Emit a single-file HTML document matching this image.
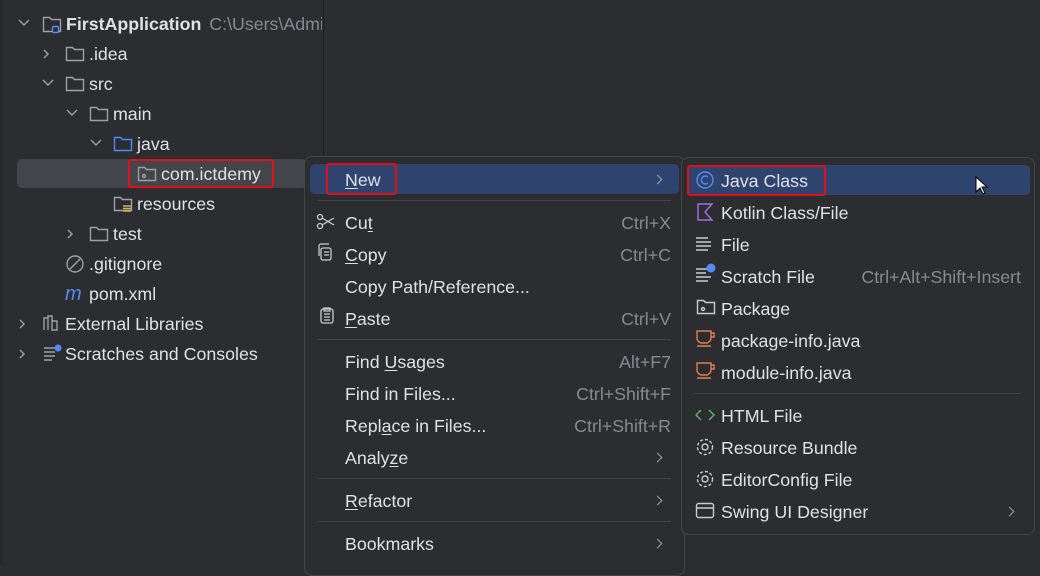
<!DOCTYPE html>
<html><head><meta charset="utf-8"><style>
*{margin:0;padding:0;box-sizing:border-box}
body{width:1040px;height:565px;background:#2b2d30;position:relative;overflow:hidden;font-family:"Liberation Sans",sans-serif;font-size:17.8px;color:#dfe1e5}
.a{position:absolute;white-space:nowrap}
.t{position:absolute;white-space:nowrap;line-height:20px}
.sc{position:absolute;white-space:nowrap;color:#868a91;line-height:20px}
.sep{position:absolute;height:1px;background:#43454a}
.arr{position:absolute;width:7px;height:7px;border-right:1.5px solid #9da0a8;border-bottom:1.5px solid #9da0a8}
.red{position:absolute;border:2px solid #e0101a;border-radius:3px}
svg{position:absolute}
u{text-decoration:underline;text-underline-offset:2px}
</style></head><body>
<div class="a" style="left:323px;top:0;width:1px;height:565px;background:#1e1f22"></div>
<div class="a" style="left:0;top:0;width:3px;height:565px;background:#26282b"></div>
<!-- tree -->
<div class="a" style="left:17px;top:159px;width:290px;height:29px;background:#43454a;border-radius:5px"></div>
<svg width="330" height="370" style="left:0;top:0" fill="none" stroke="#9da0a8" stroke-width="1.4">
<path d="M19 20l5 5 5-5"/>
<path d="M44 58l4-4-4-4"/>
<path d="M43 80l5 5 5-5"/>
<path d="M67 110l5 5 5-5"/>
<path d="M91 140l5 5 5-5"/>
<path d="M68 238l4-4-4-4"/>
<path d="M20 328l4-4-4-4"/>
<path d="M20 358l4-4-4-4"/>
<path d="M43.5 17.5h6l2 2h9v12h-17z"/>
<rect x="52.5" y="26.5" width="6" height="6" rx="1.2" stroke="#548af7" fill="#2b2d30"/>
<path d="M66.5 47.5h6l2 2h9v11h-17z"/>
<path d="M66.5 77.5h6l2 2h9v11h-17z"/>
<path d="M90.5 107.5h6l2 2h9v11h-17z"/>
<path d="M114.5 137.5h6l2 2h9v11h-17z" stroke="#548af7"/>
<path d="M138.5 167.5h6l2 2h9v11h-17z"/><circle cx="144" cy="176" r="1.5"/>
<path d="M114.5 197.5h6l2 2h9v11h-17z"/><path d="M123 206h8M123 208.5h8M123 211h8" stroke="#d6ae58"/>
<path d="M90.5 227.5h6l2 2h9v11h-17z"/>
<circle cx="75" cy="264" r="8"/><path d="M70 269l10-10"/>
<path d="M44 330v-12h4v12M48 330v-14h4v14M52 330v-9h5v9z"/>
<path d="M44 348h11M44 352h11M44 356h11M44 360h8"/><circle cx="58" cy="348" r="3.5" fill="#548af7" stroke="none"/>
</svg>
<div class="a" style="left:0;top:0;width:322px;height:40px;overflow:hidden">
<div class="t" style="left:66px;top:14px;font-weight:bold">FirstApplication <span style="font-weight:normal;color:#868a91;margin-left:3px">C:\Users\Administrator</span></div>
</div>
<div class="t" style="left:89px;top:44px">.idea</div>
<div class="t" style="left:89px;top:74px">src</div>
<div class="t" style="left:113px;top:104px">main</div>
<div class="t" style="left:137px;top:134px">java</div>
<div class="t" style="left:161px;top:164px">com.ictdemy</div>
<div class="t" style="left:137px;top:194px">resources</div>
<div class="t" style="left:113px;top:224px">test</div>
<div class="t" style="left:89px;top:254px">.gitignore</div>
<div class="t" style="left:65px;top:284px;color:#548af7;font-style:italic;font-size:20px;line-height:20px">m</div>
<div class="t" style="left:89px;top:284px">pom.xml</div>
<div class="t" style="left:65px;top:314px">External Libraries</div>
<div class="t" style="left:65px;top:344px">Scratches and Consoles</div>
<div class="red" style="left:128px;top:159px;width:146px;height:29px"></div>
<!-- menu 1 -->
<div class="a" style="left:304px;top:156px;width:381px;height:420px;background:#2b2d30;border:1px solid #43454a;border-radius:8px"></div>
<div class="a" style="left:310px;top:164px;width:369px;height:30px;background:#2e436e;border-radius:5px"></div>
<div class="t" style="left:345px;top:170px"><u>N</u>ew</div>
<div class="arr" style="left:654px;top:176px;transform:rotate(-45deg)"></div>
<div class="red" style="left:326px;top:163px;width:71px;height:32px"></div>
<div class="sep" style="left:318px;top:200px;width:353px"></div>
<svg width="30" height="120" style="left:315px;top:208px" fill="none" stroke="#c9ccd4" stroke-width="1.3">
<circle cx="5" cy="9" r="2.5"/><circle cx="5" cy="18" r="2.5"/><path d="M7 10l12 7M7 17l12-7"/>
<rect x="6" y="40" width="10" height="12" rx="2"/><path d="M4 48v-10a2 2 0 0 1 2-2h8M9 44h5M9 47h5"/>
<rect x="6" y="101" width="12" height="14" rx="2"/><path d="M9 100h6v3h-6zM9 106h6M9 109h6M9 112h6"/>
</svg>
<div class="t" style="left:345px;top:213px">Cu<u>t</u></div><div class="sc" style="right:369px;top:213px">Ctrl+X</div>
<div class="t" style="left:345px;top:245px"><u>C</u>opy</div><div class="sc" style="right:369px;top:245px">Ctrl+C</div>
<div class="t" style="left:345px;top:277px">Copy Path/Reference...</div>
<div class="t" style="left:345px;top:309px"><u>P</u>aste</div><div class="sc" style="right:369px;top:309px">Ctrl+V</div>
<div class="sep" style="left:318px;top:339px;width:353px"></div>
<div class="t" style="left:345px;top:352px">Find <u>U</u>sages</div><div class="sc" style="right:369px;top:352px">Alt+F7</div>
<div class="t" style="left:345px;top:384px">Find in Files...</div><div class="sc" style="right:369px;top:384px">Ctrl+Shift+F</div>
<div class="t" style="left:345px;top:416px">Repl<u>a</u>ce in Files...</div><div class="sc" style="right:369px;top:416px">Ctrl+Shift+R</div>
<div class="t" style="left:345px;top:448px">Analy<u>z</u>e</div><div class="arr" style="left:654px;top:454px;transform:rotate(-45deg)"></div>
<div class="sep" style="left:318px;top:478px;width:353px"></div>
<div class="t" style="left:345px;top:491px"><u>R</u>efactor</div><div class="arr" style="left:654px;top:497px;transform:rotate(-45deg)"></div>
<div class="sep" style="left:318px;top:521px;width:353px"></div>
<div class="t" style="left:345px;top:534px">Bookmarks</div><div class="arr" style="left:654px;top:540px;transform:rotate(-45deg)"></div>
<!-- menu 2 -->
<div class="a" style="left:681px;top:157px;width:354px;height:378px;background:#2b2d30;border:1px solid #43454a;border-radius:8px"></div>
<div class="a" style="left:687px;top:165px;width:343px;height:30px;background:#2e436e;border-radius:5px"></div>
<div class="red" style="left:687px;top:165px;width:139px;height:31px"></div>
<svg width="30" height="360" style="left:690px;top:165px" fill="none" stroke-width="1.4">
<circle cx="15" cy="15" r="8" stroke="#548af7"/><path d="M18 12a4 4 0 1 0 0 6" stroke="#548af7"/>
<path d="M8 39h14l-7 8 7 8h-14z" stroke="#a571e6"/>
<path d="M6 73h12M6 77h15M6 81h15M6 85h12" stroke="#c9ccd4"/>
<path d="M6 104h12M6 108h10M6 112h15M6 116h12" stroke="#c9ccd4"/><circle cx="21" cy="103" r="4.5" fill="#548af7"/>
<path d="M7.5 135.5h6l2 2h9v11h-17z" stroke="#c9ccd4"/><circle cx="13" cy="144" r="1.5" stroke="#c9ccd4"/>
<path d="M7 166h14v7a5 5 0 0 1-5 5h-4a5 5 0 0 1-5-5zM21 168h3v4h-3M7 181h14" stroke="#e07f4a"/>
<path d="M7 198h14v7a5 5 0 0 1-5 5h-4a5 5 0 0 1-5-5zM21 200h3v4h-3M7 213h14" stroke="#e07f4a"/>
<path d="M11 245l-5 5 5 5M19 245l5 5-5 5" stroke="#5fb865"/>
<g stroke="#c9ccd4"><circle cx="15" cy="282" r="3"/><circle cx="15" cy="282" r="7.5" stroke-dasharray="3 2"/>
<circle cx="15" cy="314" r="3"/><circle cx="15" cy="314" r="7.5" stroke-dasharray="3 2"/>
<rect x="6.5" y="338.5" width="17" height="14" rx="2"/><path d="M6.5 343h17"/></g>
</svg>
<div class="t" style="left:721px;top:171px">Java Class</div>
<svg width="16" height="22" style="left:975px;top:176px"><path d="M1 1v15l4-4 3 6 2-1-3-6h5z" fill="#fff" stroke="#000" stroke-width="1"/></svg>
<div class="t" style="left:721px;top:203px">Kotlin Class/File</div>
<div class="t" style="left:721px;top:235px">File</div>
<div class="t" style="left:721px;top:267px">Scratch File</div><div class="sc" style="right:19px;top:267px">Ctrl+Alt+Shift+Insert</div>
<div class="t" style="left:721px;top:299px">Package</div>
<div class="t" style="left:721px;top:331px">package-info.java</div>
<div class="t" style="left:721px;top:363px">module-info.java</div>
<div class="sep" style="left:694px;top:393px;width:327px"></div>
<div class="t" style="left:721px;top:406px">HTML File</div>
<div class="t" style="left:721px;top:438px">Resource Bundle</div>
<div class="t" style="left:721px;top:470px">EditorConfig File</div>
<div class="t" style="left:721px;top:502px">Swing UI Designer</div>
<div class="arr" style="left:1006px;top:508px;transform:rotate(-45deg)"></div>
</body></html>
